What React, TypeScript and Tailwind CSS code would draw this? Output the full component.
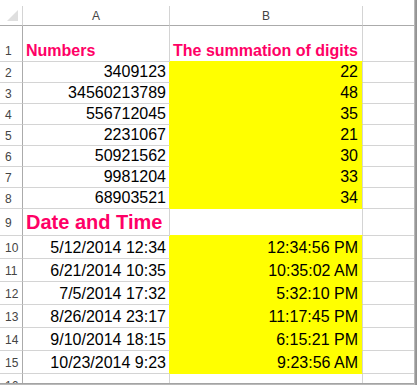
import React from 'react';

type Row = {
  n: number;
  h: string;
  a?: string;
  b?: string;
  kind?: 'head' | 'big' | 'data';
  yellow?: boolean;
};

const ROWS: Row[] = [
  { n: 1, h: 'h-[36px]', a: 'Numbers', b: 'The summation of digits', kind: 'head' },
  { n: 2, h: 'h-[21px]', a: '3409123', b: '22', yellow: true },
  { n: 3, h: 'h-[21px]', a: '34560213789', b: '48', yellow: true },
  { n: 4, h: 'h-[21px]', a: '556712045', b: '35', yellow: true },
  { n: 5, h: 'h-[21px]', a: '2231067', b: '21', yellow: true },
  { n: 6, h: 'h-[21px]', a: '50921562', b: '30', yellow: true },
  { n: 7, h: 'h-[21px]', a: '9981204', b: '33', yellow: true },
  { n: 8, h: 'h-[21px]', a: '68903521', b: '34', yellow: true },
  { n: 9, h: 'h-[27px]', a: 'Date and Time', kind: 'big' },
  { n: 10, h: 'h-[23px]', a: '5/12/2014 12:34', b: '12:34:56 PM', yellow: true },
  { n: 11, h: 'h-[23px]', a: '6/21/2014 10:35', b: '10:35:02 AM', yellow: true },
  { n: 12, h: 'h-[23px]', a: '7/5/2014 17:32', b: '5:32:10 PM', yellow: true },
  { n: 13, h: 'h-[23px]', a: '8/26/2014 23:17', b: '11:17:45 PM', yellow: true },
  { n: 14, h: 'h-[23px]', a: '9/10/2014 18:15', b: '6:15:21 PM', yellow: true },
  { n: 15, h: 'h-[23px]', a: '10/23/2014 9:23', b: '9:23:56 AM', yellow: true },
];

const GRID = 'grid grid-cols-[23px_147px_193px_51px]';

function SheetRow({ row, nextYellow }: { row: Row; nextYellow: boolean }) {
  const head = row.kind === 'head';
  const big = row.kind === 'big';
  const aBorder = row.yellow ? 'border-r-[#ffff00]' : 'border-r-[#d4d4d4]';
  const bBottom = row.yellow || nextYellow ? 'border-b-[#ffff00]' : 'border-b-[#d4d4d4]';

  return (
    <div className={`${GRID} ${row.h}`}>
      {/* row number */}
      <div className={`flex ${head ? 'items-end pb-[3px]' : 'items-center pt-[1px]'} pl-[5px] text-[12px] leading-[14px] text-[#444] border-r border-r-[#ababab] border-b border-b-[#d4d4d4]`}>
        {row.n}
      </div>

      {/* column A */}
      <div
        className={`flex items-end whitespace-nowrap border-b border-b-[#d4d4d4] border-r ${aBorder} ${
          head || big ? 'justify-start pl-[3px]' : 'justify-end pr-[3px]'
        } ${big ? 'pb-[2px]' : 'pb-px'}`}
      >
        <span
          className={
            head
              ? 'text-[16px] leading-[18px] font-bold text-[#ff0066]'
              : big
              ? 'text-[20px] leading-[22px] font-bold text-[#ff0066]'
              : 'text-[16px] leading-[18px] text-black'
          }
        >
          {row.a}
        </span>
      </div>

      {/* column B */}
      <div
        className={`flex items-end whitespace-nowrap pb-px border-r border-r-[#d4d4d4] border-b ${bBottom} ${
          row.yellow ? 'bg-[#ffff00]' : 'bg-white'
        } ${head ? 'justify-start pl-[3px]' : 'justify-end pr-[4px]'}`}
      >
        {row.b && (
          <span
            className={
              head
                ? 'text-[16px] leading-[18px] font-bold text-[#ff0066]'
                : 'text-[16px] leading-[18px] text-black'
            }
          >
            {row.b}
          </span>
        )}
      </div>

      {/* column C */}
      <div className="border-b border-b-[#d4d4d4]" />
    </div>
  );
}

export default function App() {
  return (
    <div className="w-[417px] h-[385px] overflow-hidden bg-white flex font-['Liberation_Sans',Arial,sans-serif]">
      <div className="w-[414px] flex flex-col">
        <div className="h-[6px] shrink-0" />

        {/* column header */}
        <div className={`${GRID} h-[20px] shrink-0`}>
          <div className="flex items-end justify-end pr-[4px] pb-[4px] border-r border-r-[#d4d4d4] border-b border-b-[#ababab]">
            <svg width="11" height="11" viewBox="0 0 11 11">
              <polygon points="11,0 11,11 0,11" fill="#dfdfdf" />
            </svg>
          </div>
          <div className="flex items-center justify-center text-[12px] text-[#444] border-r border-r-[#d4d4d4] border-b border-b-[#ababab]">
            A
          </div>
          <div className="flex items-center justify-center text-[12px] text-[#444] border-r border-r-[#d4d4d4] border-b border-b-[#ababab]">
            B
          </div>
          <div className="border-b border-b-[#ababab]" />
        </div>

        {ROWS.map((row, i) => (
          <SheetRow key={row.n} row={row} nextYellow={!!ROWS[i + 1]?.yellow} />
        ))}

        {/* partially visible row 16 */}
        <div className={`${GRID} h-[9px] shrink-0 overflow-hidden`}>
          <div className="pl-[5px] text-[12px] leading-[14px] text-[#444] border-r border-r-[#ababab] pt-[5px]">16</div>
          <div className="border-r border-r-[#d4d4d4]" />
          <div className="border-r border-r-[#d4d4d4]" />
          <div />
        </div>

        {/* bottom shadow */}
        <div className="h-[2px] shrink-0 bg-gradient-to-b from-[#9a9a9a] to-[#c4c4c4]" />
      </div>

      {/* right shadow */}
      <div className="w-[3px] h-full bg-gradient-to-r from-[#c8c8c8] via-[#9a9a9a] to-[#8f8f8f]" />
    </div>
  );
}
